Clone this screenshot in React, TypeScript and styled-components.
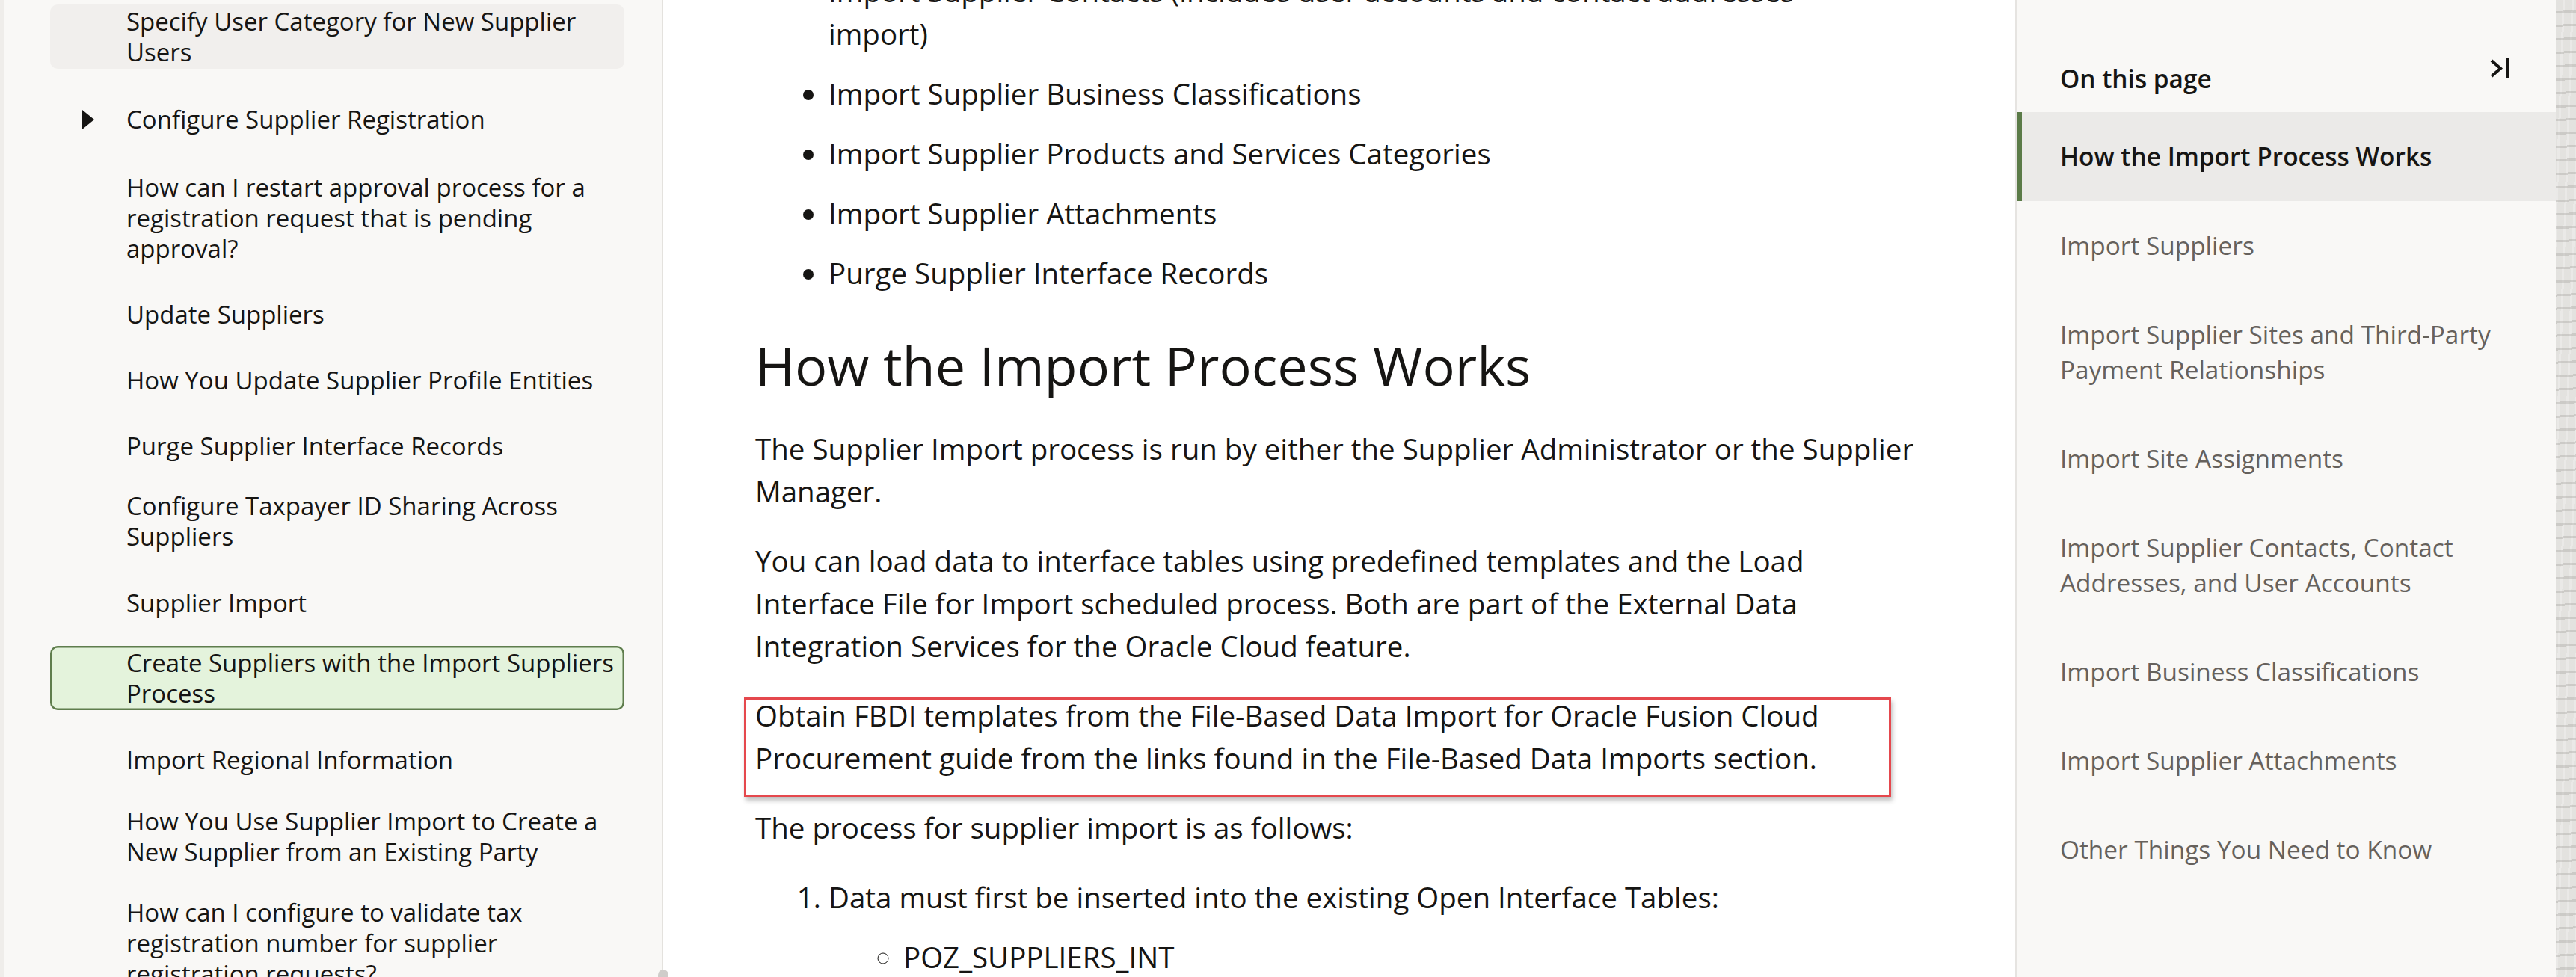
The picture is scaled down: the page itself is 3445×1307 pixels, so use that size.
import React from 'react'
import styled, { createGlobalStyle } from 'styled-components'

const GlobalStyle = createGlobalStyle`
  html, body {
    margin: 0;
    padding: 0;
    background: #ffffff;
  }

  body {
    font-family: 'Open Sans', 'Noto Sans', sans-serif;
    color: #161513;
  }

  * {
    box-sizing: border-box;
  }
`

const Page = styled.div`
  display: flex;
  width: 3445px;
  height: 1307px;
  overflow: hidden;
`

// left side: the book's table of contents
const Nav = styled.nav`
  position: relative;
  flex: 0 0 887px;
  padding-top: 6px;
  background: #f9f8f6;
  border-left: 5px solid #efedea;
  border-right: 2px solid #e4e2de;
`

const NavList = styled.ul`
  margin: 0;
  padding: 0;
  list-style: none;
`

type NavState = 'plain' | 'hover' | 'selected'

const NavItem = styled.li<{ $state: NavState; $gap: number }>`
  display: grid;
  grid-template-columns: 102px 1fr;
  width: 768px;
  margin: ${p => p.$gap}px 0 0 62px;
  padding: 2px 4px 2px 0;
  border-radius: 10px;
  font-size: 33px;
  line-height: 41px;
  color: #161513;
  background: ${p =>
    p.$state === 'selected' ? '#e4f3dc' : p.$state === 'hover' ? '#f1efed' : 'transparent'};
  box-shadow: ${p => (p.$state === 'selected' ? 'inset 0 0 0 2.5px #5f7d4d' : 'none')};
`

const Caret = styled.svg`
  margin: 8px 0 0 43px;
`

const ScrollThumb = styled.div`
  position: absolute;
  z-index: 1;
  right: -9px;
  bottom: -8px;
  width: 14px;
  height: 18px;
  border-radius: 7px;
  background: #cfcdca;
`

// middle: the article body
const Main = styled.main`
  flex: 0 0 1808px;
  padding: 0 130px 0 123px;
  background: #ffffff;
  font-size: 38.5px;
  line-height: 57px;
  color: #161513;
`

const BulletList = styled.ul<{ $top?: number }>`
  margin: ${p => p.$top ?? 0}px 0 0;
  padding-left: 98px;

  li + li {
    margin-top: 23px;
  }
`

const H2 = styled.h2`
  margin: 53px 0 43px;
  font-size: 72px;
  font-weight: 400;
  line-height: 82px;
`

const P = styled.p`
  margin: 0 0 36px;
`

// red annotation frame drawn round one paragraph
const Callout = styled(P)`
  position: relative;

  &::after {
    content: '';
    position: absolute;
    top: 4px;
    left: -15px;
    right: 36px;
    bottom: -23px;
    border: 3px solid #e5484d;
    box-shadow: 2px 5px 6px rgba(0, 0, 0, 0.25);
    pointer-events: none;
  }
`

const Steps = styled.ol`
  margin: 0;
  padding-left: 98px;
`

const SubList = styled.ul`
  margin: 23px 0 0;
  padding-left: 100px;
  list-style: circle;

  li + li {
    margin-top: 23px;
  }
`

// right side: on this page
const Toc = styled.aside`
  flex: 0 0 723px;
  padding-top: 82px;
  background: #f9f8f6;
  border-left: 3px solid #e6e4e1;
`

const TocHeader = styled.div`
  display: flex;
  justify-content: space-between;
  align-items: flex-start;
  margin-bottom: 21px;
  padding: 0 61px 0 57px;
  font-size: 33.4px;
  font-weight: 600;
  line-height: 47px;
  color: #161513;
`

const CollapseIcon = styled.svg`
  margin-top: -5px;
`

const TocList = styled.ul`
  margin: 0;
  padding: 0;
  list-style: none;
`

const TocItem = styled.li<{ $active?: boolean }>`
  padding: 36px 61px 36px 57px;
  font-size: 33.4px;
  line-height: 47px;
  font-weight: ${p => (p.$active ? 600 : 400)};
  color: ${p => (p.$active ? '#161513' : '#66615c')};
  background: ${p => (p.$active ? '#ebeae8' : 'transparent')};
  box-shadow: ${p => (p.$active ? 'inset 6px 0 0 #5b7b48' : 'none')};
`

const Grain = styled.div`
  flex: 0 0 27px;
  background-color: #e3e2df;
  background-image:
    repeating-linear-gradient(177deg, transparent 0 15px, rgba(160, 158, 153, 0.35) 15px 18px),
    repeating-linear-gradient(92deg, transparent 0 9px, rgba(255, 255, 255, 0.25) 9px 12px);
`

const navItems: { label: string; gap: number; state?: NavState; caret?: boolean }[] = [
  { label: 'Specify User Category for New Supplier Users', gap: 0, state: 'hover' },
  { label: 'Configure Supplier Registration', gap: 45, caret: true },
  { label: 'How can I restart approval process for a registration request that is pending approval?', gap: 45 },
  { label: 'Update Suppliers', gap: 43 },
  { label: 'How You Update Supplier Profile Entities', gap: 43 },
  { label: 'Purge Supplier Interface Records', gap: 43 },
  { label: 'Configure Taxpayer ID Sharing Across Suppliers', gap: 35 },
  { label: 'Supplier Import', gap: 44 },
  { label: 'Create Suppliers with the Import Suppliers Process', gap: 35, state: 'selected' },
  { label: 'Import Regional Information', gap: 44 },
  { label: 'How You Use Supplier Import to Create a New Supplier from an Existing Party', gap: 37 },
  { label: 'How can I configure to validate tax registration number for supplier registration requests?', gap: 36 },
  { label: 'Supplier Qualification', gap: 44 },
]

const tocItems = [
  'How the Import Process Works',
  'Import Suppliers',
  'Import Supplier Sites and Third-Party Payment Relationships',
  'Import Site Assignments',
  'Import Supplier Contacts, Contact Addresses, and User Accounts',
  'Import Business Classifications',
  'Import Supplier Attachments',
  'Other Things You Need to Know',
]

export default function App() {
  return (
    <>
      <GlobalStyle />
      <Page>
        <Nav>
          <NavList>
            {navItems.map(item => (
              <NavItem key={item.label} $state={item.state ?? 'plain'} $gap={item.gap}>
                <span>
                  {item.caret && (
                    <Caret width="16" height="26" viewBox="0 0 16 26">
                      <polygon points="0,0 16,13 0,26" fill="#161513" />
                    </Caret>
                  )}
                </span>
                <span>{item.label}</span>
              </NavItem>
            ))}
          </NavList>
          <ScrollThumb />
        </Nav>

        <Main>
          <BulletList $top={-40}>
            <li>
              Import Supplier Contacts (includes user accounts and contact addresses
              <br />
              import)
            </li>
            <li>Import Supplier Business Classifications</li>
            <li>Import Supplier Products and Services Categories</li>
            <li>Import Supplier Attachments</li>
            <li>Purge Supplier Interface Records</li>
          </BulletList>

          <H2>How the Import Process Works</H2>
          <P>
            The Supplier Import process is run by either the Supplier Administrator or the Supplier
            Manager.
          </P>
          <P>
            You can load data to interface tables using predefined templates and the Load Interface
            File for Import scheduled process. Both are part of the External Data Integration
            Services for the Oracle Cloud feature.
          </P>
          <Callout>
            Obtain FBDI templates from the File-Based Data Import for Oracle Fusion Cloud
            Procurement guide from the links found in the File-Based Data Imports section.
          </Callout>
          <P>The process for supplier import is as follows:</P>
          <Steps>
            <li>
              Data must first be inserted into the existing Open Interface Tables:
              <SubList>
                <li>POZ_SUPPLIERS_INT</li>
                <li>POZ_SUPPLIER_ADDRESSES_INT</li>
                <li>POZ_SUPPLIER_SITES_INT</li>
              </SubList>
            </li>
          </Steps>
        </Main>

        <Toc>
          <TocHeader>
            <span>On this page</span>
            <CollapseIcon width="28" height="29" viewBox="0 0 28 29">
              <path d="M3 4 L15 14.5 L3 25" fill="none" stroke="#161513" strokeWidth="4" />
              <line x1="24.5" y1="1" x2="24.5" y2="28" stroke="#161513" strokeWidth="4" />
            </CollapseIcon>
          </TocHeader>
          <TocList>
            {tocItems.map((label, i) => (
              <TocItem key={label} $active={i === 0}>
                {label}
              </TocItem>
            ))}
          </TocList>
        </Toc>

        <Grain />
      </Page>
    </>
  )
}
